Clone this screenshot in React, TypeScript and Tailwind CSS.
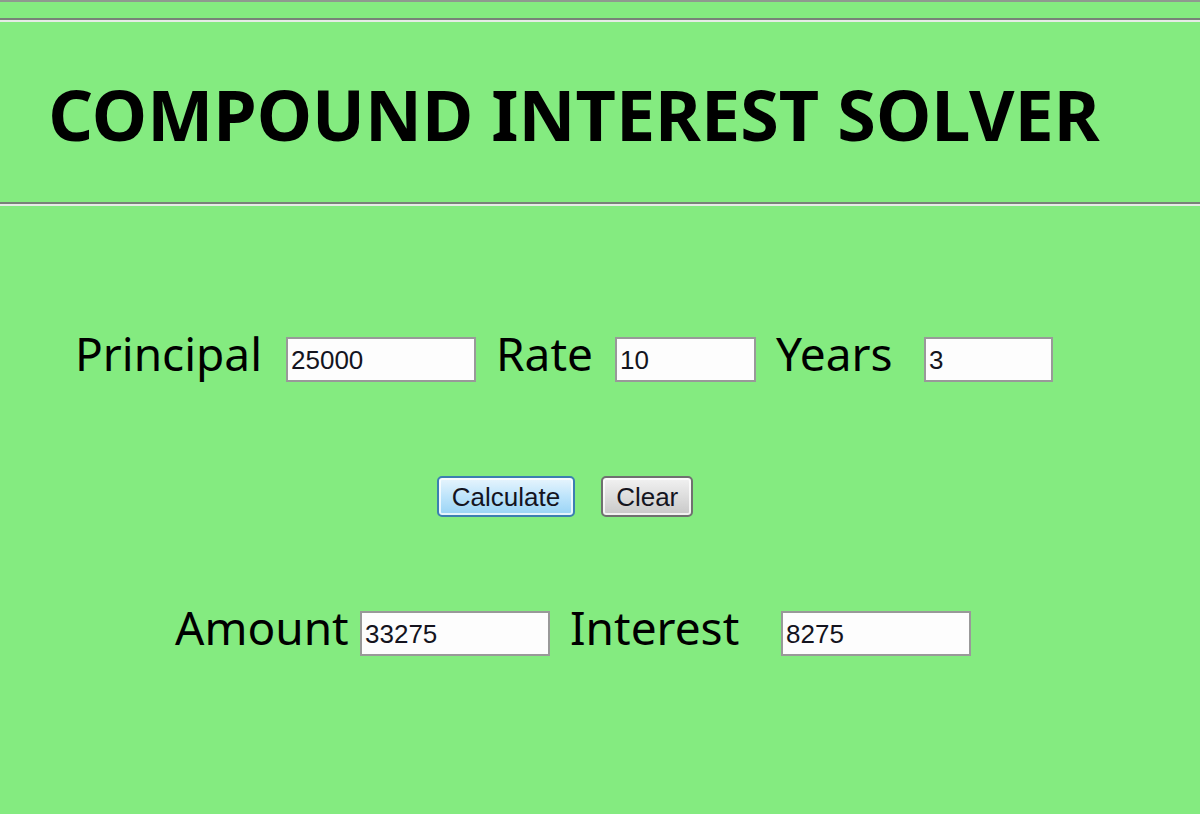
import { useState, type FormEvent } from 'react';

type FieldProps = {
  id: string;
  label: string;
  value: string;
  labelWidth: string;
  inputWidth: string;
  readOnly?: boolean;
  onChange?: (value: string) => void;
};

function Field({ id, label, value, labelWidth, inputWidth, readOnly, onChange }: FieldProps) {
  return (
    <div className="flex items-start">
      <label htmlFor={id} className={`${labelWidth} shrink-0 whitespace-nowrap text-[46px] leading-[32px]`}>
        {label}
      </label>
      <input
        id={id}
        type="text"
        value={value}
        readOnly={readOnly}
        onChange={(e) => onChange?.(e.target.value)}
        className={`${inputWidth} h-[45px] border-2 border-[#999999] bg-[#fdfdfd] px-[3px] pt-[2px] font-['Liberation_Sans',Arial,sans-serif] text-[26px] leading-[32px] text-[#14141e] outline-none`}
      />
    </div>
  );
}

function Rule() {
  return <hr className="h-1 border-t-2 border-b-2 border-t-[#788278] border-b-[#e6ebe6]" />;
}

const buttonBase =
  "h-[41px] rounded-[5px] border-2 px-[13px] font-['Liberation_Sans',Arial,sans-serif] text-[26px] leading-[32px] text-[#14141e] shadow-[inset_0_0_0_2px_rgba(255,255,255,0.75)]";

export default function App() {
  const [principal, setPrincipal] = useState('25000');
  const [rate, setRate] = useState('10');
  const [years, setYears] = useState('3');
  const [amount, setAmount] = useState('33275');
  const [interest, setInterest] = useState('8275');

  const calculate = (e: FormEvent) => {
    e.preventDefault();
    const total = Number(principal) * Math.pow(1 + Number(rate) / 100, Number(years));
    setAmount(String(Math.round(total * 100) / 100));
    setInterest(String(Math.round((total - Number(principal)) * 100) / 100));
  };

  const clear = () => {
    setPrincipal('');
    setRate('');
    setYears('');
    setAmount('');
    setInterest('');
  };

  return (
    <div className="min-h-screen bg-[#84eb80] font-['Comic_Sans_MS','Noto_Sans',sans-serif] text-black">
      <header className="border-t-2 border-[#8f998f] pt-4">
        <Rule />
        <h1 className="pt-[42px] pb-[38px] pr-[52px] text-center text-[70px] leading-[100px] font-bold whitespace-nowrap">
          COMPOUND INTEREST SOLVER
        </h1>
        <Rule />
      </header>

      <form onSubmit={calculate} className="pt-[131px]">
        <div className="flex justify-center gap-5 pr-[72px]">
          <Field id="principal" label="Principal" value={principal} labelWidth="w-[211px]" inputWidth="w-[190px]" onChange={setPrincipal} />
          <Field id="rate" label="Rate" value={rate} labelWidth="w-[119px]" inputWidth="w-[141px]" onChange={setRate} />
          <Field id="years" label="Years" value={years} labelWidth="w-[148px]" inputWidth="w-[129px]" onChange={setYears} />
        </div>

        <div className="flex justify-center gap-[26px] py-[94px] pr-[70px]">
          <button type="submit" className={`${buttonBase} border-[#3c7fb1] bg-linear-to-b from-[#e8f5fd] from-0% via-[#bde4fb] via-50% to-[#98d3f5] to-100%`}>
            Calculate
          </button>
          <button type="button" onClick={clear} className={`${buttonBase} border-[#707070] bg-linear-to-b from-[#f2f2f2] from-0% via-[#dddddd] via-50% to-[#c8c8c8] to-100%`}>
            Clear
          </button>
        </div>

        <div className="flex justify-center gap-5 pr-[54px]">
          <Field id="amount" label="Amount" value={amount} labelWidth="w-[185px]" inputWidth="w-[190px]" readOnly />
          <Field id="interest" label="Interest" value={interest} labelWidth="w-[211px]" inputWidth="w-[190px]" readOnly />
        </div>
      </form>
    </div>
  );
}
